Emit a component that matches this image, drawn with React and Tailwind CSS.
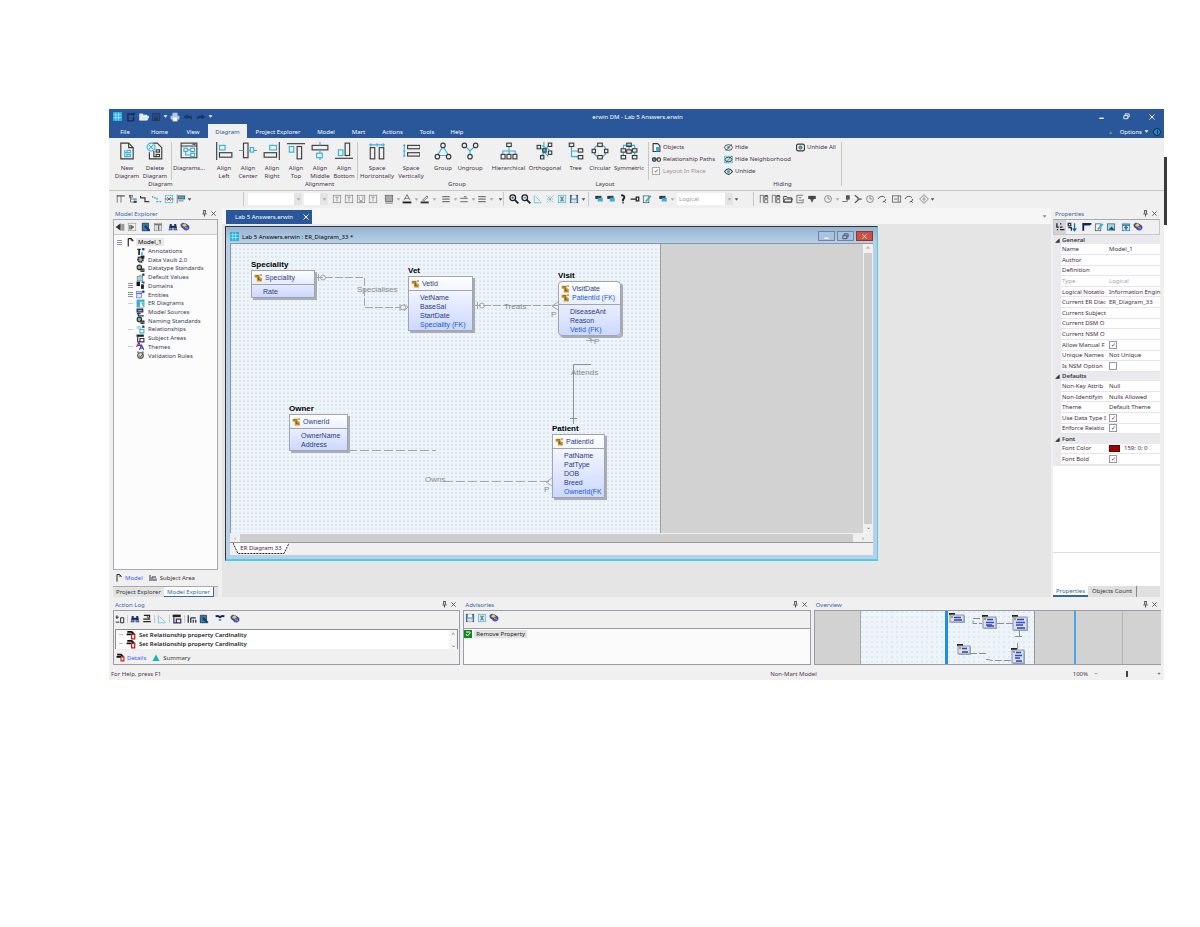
import React from "react";

const K = "#3a3a3a";
const C = "#35b0d8";

const box = (x, y, w, h, s = K, f = "none") => (
  <rect x={x} y={y} width={w} height={h} stroke={s} fill={f} />
);
const ln = (d, s = K) => <path d={d} stroke={s} fill="none" />;

const ICONS = {
  newDiagram: <>{ln("M2.5 1h7l4 4v10h-11z")}{ln("M9.500 1v4h4")}{ln("M6 7v6h2M6 9.500h2", C)}{box(8, 7.5, 3, 2, C)}{box(8, 11, 3, 2, C)}</>,
  deleteDiagram: <>{ln("M6 1h4l4 4v10H3V9")}{ln("M7 8v5h2")}{box(9, 7, 3, 2)}{box(9, 11, 3, 2)}<circle cx="4.500" cy="4.500" r="3.500" stroke={C} fill="#fff" />{ln("M2.500 2.500l4 4M6.500 2.500l-4 4", C)}</>,
  diagrams: <>{box(1, 1, 14, 13)}{ln("M1 3.500h14M11 2h3")}{box(3.5, 5.5, 3, 3, C)}{box(9.5, 5.5, 3.5, 3, C)}{box(9.5, 10, 3.5, 3, C)}{ln("M7 7h2M5 9v2.500h4", C)}</>,
  alignLeft: <>{ln("M1.500 0v16")}{box(4, 3, 5, 4, C)}{box(4, 9.5, 11, 4)}</>,
  alignCenter: <>{box(4, 1, 4, 13)}{box(10, 5, 3, 4, C)}{ln("M0 7.500h4M8 7.500h2M13 7.500h3", C)}</>,
  alignRight: <>{ln("M14.500 0v16")}{box(6, 3, 6, 4, C)}{box(1, 9.5, 11, 4)}</>,
  alignTop: <>{ln("M0 1.500h16")}{box(2, 4, 4, 5, C)}{box(9, 4, 4, 11)}</>,
  alignMiddle: <>{box(1, 3, 14, 4)}{box(5, 10, 5, 4, C)}{ln("M8 0v3M8 7v3M8 14v2", C)}</>,
  alignBottom: <>{ln("M0 14.500h16")}{box(3, 7, 4, 5, C)}{box(9, 1, 4, 11)}</>,
  spaceH: <>{box(2, 5, 4, 10)}{box(10, 5, 4, 10)}{ln("M1 2.500h14M2.500 1v3M8 1v3M13.500 1v3", C)}</>,
  spaceV: <>{box(5, 3, 11, 3)}{box(5, 9.5, 11, 3)}{ln("M2 2v11M1 3h2M1 8h2M1 12.500h2", C)}</>,
  group: <>{ln("M8 4L3 12h10z", C)}<circle cx="8" cy="3" r="2" stroke={K} fill="#f0f0f0" /><circle cx="3" cy="13" r="2" stroke={K} fill="#f0f0f0" /><circle cx="13" cy="13" r="2" stroke={K} fill="#f0f0f0" /></>,
  ungroup: <>{ln("M3 3l5 5 5-5M8 8v4", C)}<circle cx="3" cy="3" r="2" stroke={K} fill="#f0f0f0" /><circle cx="13" cy="3" r="2" stroke={K} fill="#f0f0f0" /><circle cx="8" cy="13" r="2" stroke={K} fill="#f0f0f0" /></>,
  hierarchical: <>{ln("M8 4v4M2.500 11V8h11v3M8 8v3", C)}{box(6, 1, 4, 3)}{box(1, 11, 3.5, 4)}{box(6.2, 11, 3.5, 4)}{box(11.5, 11, 3.5, 4)}</>,
  orthogonal: <>{ln("M4 5l7 8M11 3L5 13M5 3l7 4M7 0v10", C)}{box(1, 3, 3, 3)}{box(11, 1, 3, 3)}{box(6, 6, 3, 3)}{box(4, 12, 3, 3)}{box(11, 8, 3, 3)}</>,
  tree: <>{ln("M4 4v9h6M4 8h6", C)}{box(2, 1, 4, 3)}{box(10, 6, 4, 3)}{box(10, 12, 4, 3)}</>,
  circular: <><circle cx="8" cy="8" r="5.500" stroke={C} fill="none" />{box(6, 1, 4, 3, K, "#f0f0f0")}{box(6, 12, 4, 3, K, "#f0f0f0")}{box(1, 6.5, 3, 3, K, "#f0f0f0")}{box(12, 6.5, 3, 3, K, "#f0f0f0")}</>,
  symmetric: <>{ln("M8 3v4M3 6V3h10v3M3 9v3M13 9v3", C)}{box(6, 1, 4, 3)}{box(1, 6, 4, 3)}{box(6, 7, 4, 3)}{box(11, 6, 4, 3)}{box(1, 12, 4, 3)}{box(11, 12, 4, 3)}</>,
  objects: <><path d="M2 1h8l4 4v10H2z" fill="#fff" stroke={K} strokeWidth="2" /><path d="M7 7h6v8H7z" fill={C} /></>,
  relPaths: <><rect x="1" y="5" width="6" height="6" rx="2" stroke={K} fill={C} strokeWidth="2" /><rect x="9" y="5" width="6" height="6" rx="2" stroke={K} fill="none" strokeWidth="2" />{ln("M5 8h6")}</>,
  hide: <><ellipse cx="8" cy="8" rx="7" ry="5" stroke={K} fill="none" strokeWidth="1.500" /><circle cx="8" cy="8" r="2.500" fill={C} />{ln("M3 14L14 2")}</>,
  hideN: <><rect x="1" y="2" width="14" height="12" fill="#bfe4f2" stroke={C} /><ellipse cx="8" cy="8" rx="6" ry="4" stroke={K} fill="none" strokeWidth="1.500" />{ln("M3 14L14 2")}</>,
  unhide: <><path d="M1 8q7-10 14 0q-7 10-14 0z" stroke={K} fill="#fff" strokeWidth="2" /><circle cx="8" cy="8" r="3" fill={C} /></>,
  unhideAll: <><rect x="1" y="2" width="14" height="12" rx="3" stroke={K} fill="none" strokeWidth="2" /><circle cx="8" cy="8" r="3" fill={C} stroke={K} /></>,
  table: <>{ln("M2 2v12M1 3h13M8 3v11M2 3h12")}</>,
  nodes: <>{ln("M4 2v11h9M4 8h6")}{box(2, 2, 5, 3)}<rect x="9" y="7" width="5" height="3" fill={C} /><rect x="9" y="11" width="5" height="3" fill={K} /></>,
  rel: <path d="M1 3v3h7v6h7" stroke={K} fill="none" strokeWidth="2" />,
  relDash: <path d="M1 3v3h7v6h7" stroke={C} fill="none" strokeWidth="2" strokeDasharray="3 2" />,
  grid4: <>{box(2, 2, 12, 12, C)}{ln("M5 5l6 6M11 5l-6 6M1 8h14")}</>,
  alignS: <>{ln("M2 1v14")}<rect x="4" y="3" width="10" height="5" fill={C} stroke={K} />{ln("M4 11h8")}</>,
  cell: <>{box(2, 2, 12, 12, "#777")}{ln("M5 5h6M8 5v7", "#777")}</>,
  cellU: <>{box(2, 2, 12, 12, "#777")}{ln("M5 4v5q3 4 6 0V4M5 12h6", "#777")}</>,
  bucket: <>{box(2, 2, 12, 10, "#555", "#aaa")}{ln("M2 14.500h12")}</>,
  fontA: <>{ln("M3 10L8 1l5 9M5 7h6")}<rect x="1" y="12" width="14" height="3" fill="#222" /></>,
  pen: <>{ln("M4 10l7-7 2 2-7 6z")}<rect x="1" y="12" width="13" height="3" fill="#333" /></>,
  lines: <path d="M2 4h12M2 8h12M2 12h12" stroke="#777" strokeWidth="2" />,
  lines2: <path d="M2 7h12M2 12h12M8 4h4" stroke="#888" strokeWidth="2" />,
  zoomIn: <><circle cx="6" cy="6" r="4.500" stroke="#222" fill="#cfeaf5" strokeWidth="2" /><path d="M9 9l6 6" stroke="#222" strokeWidth="3" />{ln("M4 6h4M6 4v4")}</>,
  zoomOut: <><circle cx="6" cy="6" r="4.500" stroke="#222" fill="#cfeaf5" strokeWidth="2" /><path d="M9 9l6 6" stroke="#222" strokeWidth="3" />{ln("M4 6h4")}</>,
  corner: <path d="M2 2v12h12M4 4l8 8" stroke={C} fill="none" />,
  fit: <path d="M2 2l12 12M14 2L2 14M8 3v10M3 8h10" stroke="#6f9fb5" fill="none" strokeDasharray="3 1" />,
  fitBox: <>{box(2, 2, 12, 12, C, "#d6eef7")}{ln("M5 5h2v6H5M11 5H9v6h2")}</>,
  save: <>{box(2, 2, 12, 12, "#335", "#5aa8c8")}<rect x="5" y="2" width="6" height="5" fill="#fff" /><rect x="4" y="9" width="8" height="5" fill="#dde" /></>,
  flag: <><path d="M2 3h10v5H2z" fill={K} /><path d="M6 6h8v6H6z" fill={C} /></>,
  pin2: <><path d="M5 2q6 0 5 4l-2 3v2" stroke="#222" fill="none" strokeWidth="3" /><path d="M7 12h2v3H7z" fill="#222" /></>,
  plug: <path d="M1 8h9M10 5h4v6h-4z" stroke="#222" fill="none" strokeWidth="2" />,
  edit: <>{box(2, 3, 9, 11)}<path d="M6 12l8-9" stroke={C} strokeWidth="3" /></>,
  db: <>{ln("M2 2h5v12M2 2v12M9 3h5v4H9zM9 9h5v5H9z")}<path d="M9 2h5v2H9z" fill={K} /></>,
  folder: <path d="M1 4h5l1 2h7v7H1zM3 8h12l-2 5H1z" stroke="#444" fill="none" strokeWidth="1.500" />,
  doc: <>{ln("M3 2h10M3 2v12h10V8")}{ln("M6 6h4M6 10h6")}</>,
  download: <><path d="M2 3h12v5H2z" fill="#444" /><path d="M5 8h6l-3 6z" fill="#555" /></>,
  clock: <><circle cx="8" cy="8" r="5.500" stroke="#555" fill="none" />{ln("M8 4v4h3", "#555")}</>,
  branch: <path d="M3 2l5 4v4l-5 4M8 8h6" stroke="#555" fill="none" strokeWidth="2" />,
  fwd: <>{ln("M2 12h8V3")}<path d="M8 2h6v7H8z" fill="#555" /></>,
  sync: <path d="M2 8a6 5 0 0 1 11-2M14 8a6 5 0 0 1-5 5M11 11l3 3" stroke="#555" fill="none" strokeWidth="1.500" />,
  card: <>{box(1, 3, 13, 10, "#333")}{ln("M10 3v10M3 8h6")}</>,
  diamond: <><path d="M8 1l7 7-7 7-7-7z" stroke="#555" fill="none" />{ln("M8 4v8M5 8h6", "#777")}</>,
  app: <><rect x="0" y="0" width="16" height="16" fill="#22b0dc" /><path d="M1 5h14M1 10h14M5 1v14M10 1v14" stroke="#e6f8ff" /></>,
  newW: <path d="M10 3H3v11h9V8M9 5l5-4M12 1v5" stroke="#12284d" fill="none" strokeWidth="2" />,
  openW: <path d="M1 13V3h5l1 2h6v2M1 13l3-6h12l-3 6z" stroke="#fff" fill="#dde6f2" />,
  saveW: <>{box(2, 2, 12, 12, "#20365e", "#2c4878")}<rect x="5" y="9" width="6" height="5" fill="#20365e" /></>,
  printW: <><path d="M4 1h8v5h3v6h-3v3H4v-3H1V6h3z" fill="#b9c8df" /><rect x="5" y="9" width="6" height="5" fill="#fff" /></>,
  undo: <path d="M1 8l6-5v3h6q2 2 1 6-2-3-7-3v3z" fill="#1c3560" />,
  redo: <path d="M15 8L9 3v3H3Q1 8 2 12q2-3 7-3v3z" fill="#1c3560" />,
  key: <><path d="M1 3h9v4l4 2v6H5V9L1 8z" fill="#c79a2e" /><path d="M3 5h6M6 10l6 3M8 7v5" stroke="#5b4210" /><path d="M11 2h3v3h-3z" fill="#d96c3a" /></>,
  page: <><path d="M4 1h5l4 4M4 1v14" stroke="#222" fill="none" strokeWidth="2" /><path d="M9 1v4h4" stroke="#222" fill="none" /></>,
  note: <><path d="M2 3h7v2H7v9H4V5H2z" fill="#222" /><rect x="11" y="2" width="4" height="4" fill="#113a8c" /><rect x="9" y="9" width="3" height="5" fill={C} /></>,
  gearB: <><circle cx="8" cy="8" r="4.500" stroke="#222" fill="#aaa" strokeWidth="3" strokeDasharray="3 1" /><rect x="9" y="1" width="6" height="5" fill="#222" /></>,
  gearG: <><circle cx="6" cy="6" r="4" stroke="#333" fill="#7b8" strokeWidth="2" /><rect x="8" y="8" width="7" height="6" fill="#222" /><path d="M9 11h5" stroke="#fff" /></>,
  val: <><rect x="2" y="6" width="10" height="8" fill="#9ed3ec" stroke="#578" /><path d="M5 3h5v4H5z" fill="#d7ae5b" /><rect x="11" y="1" width="4" height="4" fill="#113a8c" /></>,
  domain: <><rect x="1" y="1" width="6" height="8" fill="#111" /><rect x="9" y="6" width="5" height="8" fill="#222" /><path d="M10 2h4v3" stroke="#113a8c" fill="none" strokeWidth="2" /></>,
  entity: <><rect x="1" y="3" width="9" height="11" fill="#dfe2fb" stroke="#5560bb" /><path d="M1 6h9" stroke="#5560bb" strokeWidth="2" /><rect x="11" y="1" width="4" height="4" fill="#113a8c" /></>,
  erd: <><rect x="1" y="1" width="14" height="14" fill={C} /><path d="M7 5h6v9H7z" fill="#fff" /><path d="M9 7h3v5" stroke="#15537a" fill="none" /></>,
  source: <><path d="M2 2h10v5H2zM2 10h6" stroke="#223" fill="#99a" strokeWidth="2" /><path d="M4 8v6h10" stroke="#113a8c" fill="none" strokeWidth="2" /></>,
  relT: <><path d="M1 2h8v5H1z" fill="#9fdcec" /><path d="M7 8h7v6H7z" stroke={C} fill="#fff" strokeWidth="2" /><rect x="11" y="1" width="4" height="4" fill="#113a8c" /></>,
  subject: <><rect x="1" y="1" width="13" height="4" fill="#222" /><path d="M3 5v9h11V8H7v6" stroke="#335" fill="none" strokeWidth="2" /></>,
  theme: <><path d="M1 9L5 1l4 8M3 6h4" stroke="#7a2b90" fill="none" strokeWidth="2" /><path d="M6 14l4-8 4 8M8 11h5" stroke="#3c4cc0" fill="none" strokeWidth="2" /></>,
  rule: <><circle cx="8" cy="8" r="5" stroke="#555" fill="#f3dfc5" strokeWidth="2" /><path d="M2 2h4M10 2h4M6 8l2 3 4-6" stroke="#333" fill="none" strokeWidth="1.500" /></>,
  back: <><path d="M9 2v12L1 8z" fill="#333" /><rect x="10" y="3" width="5" height="11" fill="#999" /></>,
  play: <>{box(2, 2, 12, 12, "#999")}<path d="M4 5v7M6 5l5 3-5 4z" stroke="#444" fill="#777" /></>,
  editB: <><path d="M2 2h10v12H2z" fill="#2e7bb5" stroke="#113" /><path d="M6 6l8 8" stroke="#143a66" strokeWidth="3" /></>,
  tableG: <>{box(2, 2, 12, 12, "#888", "#ddd")}<path d="M2 4h12M9 4v10" stroke="#777" strokeWidth="2" /></>,
  binoc: <><path d="M3 3h3v3h4V3h3l2 10H9V9H7v4H1z" fill="#1c2c66" /><path d="M2 11h4M10 11h4" stroke="#8fb0e0" strokeWidth="2" /></>,
  book: <><ellipse cx="8" cy="7" rx="7" ry="4" transform="rotate(25 8 7)" fill="#4b50b8" stroke="#222e66" /><path d="M3 5l4-3 4 3-4 3z" fill="#e6cf4e" /><path d="M6 11q5 4 8-1" stroke="#4b50b8" fill="none" strokeWidth="2" /><path d="M8 9l5 1" stroke="#dfe3ff" /></>,
  sort: <path d="M3 2v6h3M3 12h2M8 3h2M8 8h4M8 12h7" stroke="#222" fill="none" strokeWidth="2" />,
  sortAZ: <><path d="M2 2h4v4H2zM2 9h5v5" stroke="#234" fill="none" strokeWidth="2" /><path d="M12 2v11M9 10l3 4 3-4" stroke="#1769b5" fill="none" strokeWidth="2" /></>,
  tbl: <path d="M2 14V3h13M3 4h10" stroke="#16265a" fill="none" strokeWidth="3" />,
  photo: <><rect x="2" y="3" width="12" height="10" fill="#9dd" stroke="#245" /><path d="M4 12l5-5 5 6z" fill="#14508c" /></>,
  cal: <><rect x="2" y="3" width="12" height="11" fill="#cfe8f5" stroke="#1f6b8f" /><path d="M2 5h12M8 6v7M5 9h6" stroke="#1f6b8f" strokeWidth="2" /></>,
  plusD: <path d="M3 2v6M1 5h5M1 13h6M9 6h5v8H9z" stroke="#222" fill="none" strokeWidth="1.500" />,
  listEdit: <><path d="M3 2h9v4M2 8h11M2 12h12" stroke="#222" fill="none" strokeWidth="2" /><path d="M8 4l5 5" stroke="#555" strokeWidth="2" /></>,
  undoDoc: <><path d="M2 3h7l3 3v7M1 7h8" stroke="#111" fill="none" strokeWidth="3" /><path d="M9 7h5v7H9z" stroke="#c21c1c" fill="#fff" strokeWidth="2" /></>,
  tri: <path d="M8 1l7 13H1z" fill="#16b5b5" />,
  check: <><rect x="0" y="0" width="16" height="16" fill="#0e8a1c" /><path d="M4 4h8M4 8l3 4 6-7" stroke="#fff" fill="none" strokeWidth="2" /></>,
  pin: <path d="M5 1h6M6 1v7M10 1v7M3 9h10M8 9v6" stroke="#444" fill="none" strokeWidth="2" />,
  x: <path d="M3 3l10 10M13 3L3 13" stroke="currentColor" fill="none" strokeWidth="2" />,
  filter: <><path d="M1 4q3-2 7 1 4-3 7-1" stroke="#16265a" fill="none" strokeWidth="3" /><path d="M6 8h4v3H6z" fill="#5a8fd0" /></>,
  min: <path d="M3 12h10" stroke="currentColor" strokeWidth="3" />,
  restore: <path d="M5 5V2h9v7h-3M2 6h9v7H2z" stroke="currentColor" fill="none" strokeWidth="2" />,
  chart: <path d="M2 2v12M6 6h8M6 6v8M10 9v5M14 9v5" stroke="#234" fill="none" strokeWidth="2" />,
};

const SIZES = { 7: "size-[7px]", 8: "size-2", 9: "size-[9px]", 10: "size-[10px]", 18: "size-[18px]" };

function Icon({ n, s = 10 }) {
  return (
    <svg viewBox="0 0 16 16" className={`${SIZES[s]} shrink-0`} aria-hidden="true">
      {ICONS[n]}
    </svg>
  );
}

function IconButton({ n, label, s = 10, w = "w-3" }) {
  return (
    <button aria-label={label || n} className={`${w} flex shrink-0 items-center justify-center`}>
      <Icon n={n} s={s} />
    </button>
  );
}

function Arrow({ className = "text-[#888]" }) {
  return (
    <svg viewBox="0 0 8 8" className={`size-[5px] shrink-0 ${className}`} aria-hidden="true">
      <path d="M1 2h6L4 6z" fill="currentColor" />
    </svg>
  );
}

function TitleBar() {
  return (
    <header className="bg-[#2a579a] text-white">
      <div className="flex h-[15px] items-center">
        <div className="flex flex-1 items-center gap-[2px] pl-[2px]">
          <IconButton n="app" w="w-3" s={9} />
          <IconButton n="newW" />
          <IconButton n="openW" w="w-[10px]" />
          <IconButton n="saveW" w="w-[10px]" />
          <Arrow className="text-white" />
          <IconButton n="printW" w="w-[10px]" />
          <IconButton n="undo" />
          <IconButton n="redo" w="w-[10px]" />
          <Arrow className="text-white" />
        </div>
        <h1>erwin DM - Lab 5 Answers.erwin</h1>
        <div className="flex flex-1 justify-end">
          <IconButton n="min" s={7} w="w-[25px]" />
          <IconButton n="restore" s={7} w="w-[25px]" />
          <IconButton n="x" s={8} w="w-[25px]" />
        </div>
      </div>
      <nav className="flex h-[14px] items-stretch">
        {[
          ["File", "w-8"], ["Home", "w-[37px]"], ["View", "w-[30px]"], ["Diagram", "w-[39px] bg-[#f0f0f0] text-[#2a579a]"],
          ["Project Explorer", "w-[62px]"], ["Model", "w-[34px]"], ["Mart", "w-[31px]"], ["Actions", "w-[37px]"],
          ["Tools", "w-8"], ["Help", "w-7"],
        ].map(([t, c]) => (
          <button key={t} className={`${c} shrink-0 whitespace-nowrap pt-[2px]`}>{t}</button>
        ))}
        <div className="flex flex-1 items-center justify-end gap-1 pr-[3px] pt-px">
          <span className="text-[#8c8c8c]">▴</span>
          <button className="flex items-center gap-[2px] pl-1">Options<Arrow className="text-white" /></button>
          <button aria-label="About" className="flex size-2 items-center justify-center rounded-full border border-[#10233f] bg-[#1f8fd0]">
            <span className="h-1 w-px bg-[#10233f]" />
          </button>
        </div>
      </nav>
    </header>
  );
}

function BigButton({ n, label, w }) {
  return (
    <button className={`${w} flex shrink-0 flex-col items-center`}>
      <Icon n={n} s={18} />
      <span className="mt-1 whitespace-pre text-center leading-[8px]">{label}</span>
    </button>
  );
}

function RibbonGroup({ title, className, children }) {
  return (
    <section className={`flex shrink-0 flex-col ${className}`}>
      <div className="flex h-[38px]">{children}</div>
      <h2 className="text-center leading-[8px]">{title}</h2>
    </section>
  );
}

const Sep = ({ className = "" }) => <span className={`w-px shrink-0 bg-[#c8c8c8] ${className}`} />;

function SmallButton({ n, label }) {
  return (
    <button className="flex h-3 items-center gap-[2px] whitespace-nowrap text-left">
      <Icon n={n} s={9} />
      {label}
    </button>
  );
}

function Ribbon() {
  return (
    <div className="flex h-[53px] border-b border-[#c6c6c6] bg-[#f0f0f0] pl-1 pt-1 text-[#47304a]">
      <RibbonGroup title="Diagram" className="w-[95px]">
        <BigButton n="newDiagram" label={"New\nDiagram"} w="w-[28px]" />
        <BigButton n="deleteDiagram" label={"Delete\nDiagram"} w="w-[28px]" />
        <Sep className="ml-[2px]" />
        <BigButton n="diagrams" label="Diagrams..." w="w-[34px]" />
      </RibbonGroup>
      <RibbonGroup title="Alignment" className="ml-1 w-[215px]">
        <BigButton n="alignLeft" label={"Align\nLeft"} w="w-6" />
        <BigButton n="alignCenter" label={"Align\nCenter"} w="w-6" />
        <BigButton n="alignRight" label={"Align\nRight"} w="w-6" />
        <BigButton n="alignTop" label={"Align\nTop"} w="w-6" />
        <BigButton n="alignMiddle" label={"Align\nMiddle"} w="w-6" />
        <BigButton n="alignBottom" label={"Align\nBottom"} w="w-6" />
        <Sep className="mx-px" />
        <BigButton n="spaceH" label={"Space\nHorizontally"} w="w-[36px]" />
        <BigButton n="spaceV" label={"Space\nVertically"} w="w-8" />
      </RibbonGroup>
      <RibbonGroup title="Group" className="ml-[3px] w-[54px]">
        <BigButton n="group" label="Group" w="w-[26px]" />
        <BigButton n="ungroup" label="Ungroup" w="w-[28px]" />
      </RibbonGroup>
      <RibbonGroup title="Layout" className="ml-[6px] w-[230px]">
        <BigButton n="hierarchical" label="Hierarchical" w="w-[37px]" />
        <BigButton n="orthogonal" label="Orthogonal" w="w-[36px]" />
        <BigButton n="tree" label="Tree" w="w-[25px]" />
        <BigButton n="circular" label="Circular" w="w-6" />
        <BigButton n="symmetric" label="Symmetric" w="w-[34px]" />
        <Sep className="ml-[2px]" />
        <div className="-mt-px ml-[3px] flex flex-col">
          <SmallButton n="objects" label="Objects" />
          <SmallButton n="relPaths" label="Relationship Paths" />
          <label className="flex h-3 items-center gap-[3px] whitespace-nowrap text-[#a08f98]">
            <input type="checkbox" defaultChecked className="size-2 appearance-none border border-[#aaa] bg-white text-center leading-[6px] text-[#333] checked:before:block checked:before:content-['✓']" />
            Layout In Place
          </label>
        </div>
      </RibbonGroup>
      <RibbonGroup title="Hiding" className="ml-[4px] w-[117px]">
        <div className="-mt-px flex w-[72px] flex-col">
          <SmallButton n="hide" label="Hide" />
          <SmallButton n="hideN" label="Hide Neighborhood" />
          <SmallButton n="unhide" label="Unhide" />
        </div>
        <div className="-mt-px">
          <SmallButton n="unhideAll" label="Unhide All" />
        </div>
      </RibbonGroup>
      <Sep className="mb-1" />
    </div>
  );
}

function Combo({ label, value, w }) {
  return (
    <span className={`relative flex h-3 shrink-0 ${w}`}>
      <select aria-label={label} className="w-full appearance-none rounded-none bg-white pl-[2px] text-[#999]" defaultValue={value}>
        <option>{value}</option>
      </select>
      <span className="pointer-events-none absolute inset-y-0 right-0 flex w-2 items-center justify-center bg-[#e4e4e4]">
        <Arrow className="text-[#aaa]" />
      </span>
    </span>
  );
}

function Icons({ names }) {
  return names.map((n, i) => <IconButton key={i} n={n} />);
}

function WithArrow({ n, w = "w-[18px]" }) {
  return (
    <button aria-label={n} className={`flex ${w} shrink-0 items-center justify-between pl-px`}>
      <Icon n={n} />
      <Arrow className="text-[#aaa]" />
    </button>
  );
}

function ToolStrip() {
  return (
    <div className="flex h-4 items-center bg-[#f0f0f0] pl-[6px] text-[#555]">
      <div className="flex w-32 items-center">
        <Icons names={["table", "nodes", "rel", "relDash", "grid4", "alignS"]} />
        <Arrow className="text-[#555]" />
      </div>
      <Sep className="h-[14px]" />
      <div className="ml-1 flex w-[255px] items-center">
        <Combo label="Font" value="" w="w-[54px]" />
        <span className="w-[2px]" />
        <Combo label="Font size" value="" w="w-6" />
        <span className="w-[3px]" />
        <Icons names={["cell", "cell", "cellU", "cell"]} />
        <span className="w-1" />
        <WithArrow n="bucket" />
        <WithArrow n="fontA" />
        <WithArrow n="pen" />
        <span className="w-[3px]" />
        <WithArrow n="lines" />
        <WithArrow n="lines2" />
        <WithArrow n="lines" />
        <Arrow className="ml-1 text-[#555]" />
      </div>
      <Sep className="h-[14px]" />
      <div className="ml-1 flex w-[80px] items-center">
        <Icons names={["zoomIn", "zoomOut", "corner", "fit", "fitBox", "save"]} />
        <Arrow className="ml-px text-[#555]" />
      </div>
      <Sep className="h-[14px]" />
      <div className="ml-1 flex w-40 items-center">
        <Icons names={["flag", "flag", "pin2", "plug", "edit"]} />
        <span className="w-1" />
        <WithArrow n="flag" />
        <span className="w-[2px]" />
        <Combo label="Model view" value="Logical" w="w-[56px]" />
        <Arrow className="ml-px text-[#555]" />
      </div>
      <Sep className="h-[14px]" />
      <div className="ml-1 flex items-center">
        <Icons names={["db", "db", "folder", "doc", "download"]} />
        <span className="w-1" />
        <WithArrow n="clock" />
        <Icons names={["fwd", "branch", "clock", "sync"]} />
        <span className="w-[3px]" />
        <Icons names={["card", "sync"]} />
        <span className="w-[3px]" />
        <IconButton n="diamond" />
        <Arrow className="text-[#555]" />
      </div>
    </div>
  );
}

function PaneHeader({ title, className = "" }) {
  return (
    <div className={`flex h-[11px] shrink-0 items-center pl-[2px] text-[#3465a4] ${className}`}>
      <h2 className="flex-1">{title}</h2>
      <button aria-label="Pin" className="px-px"><Icon n="pin" s={7} /></button>
      <button aria-label="Close" className="px-px text-[#555]"><Icon n="x" s={7} /></button>
    </div>
  );
}

const TREE = [
  ["note", "Annotations", ""], ["gearB", "Data Vault 2.0", ""], ["gearG", "Datatype Standards", ""], ["val", "Default Values", ""],
  ["domain", "Domains", "+"], ["entity", "Entities", "+"], ["erd", "ER Diagrams", "-"], ["source", "Model Sources", ""],
  ["gearG", "Naming Standards", ""], ["relT", "Relationships", "-"], ["subject", "Subject Areas", ""], ["theme", "Themes", "-"],
  ["rule", "Validation Rules", ""],
];

function Expander({ kind }) {
  if (kind === "+") return <span className="flex size-[5px] items-center border-y border-[#8a8f9c] bg-white"><i className="h-px w-full bg-[#8a8f9c]" /></span>;
  if (kind === "-") return <span className="h-px w-[5px] bg-[#ccc]" />;
  return <span className="w-[5px]" />;
}

function ModelExplorer() {
  return (
    <aside className="flex w-[113px] shrink-0 flex-col pl-1">
      <PaneHeader title="Model Explorer" className="pr-1" />
      <div className="mr-1 flex h-4 items-center border border-[#a9a9b2] border-b-[#c8c8c8]">
        <Icons names={["back", "play"]} />
        <span className="w-[2px]" />
        <Icons names={["editB", "tableG"]} />
        <span className="w-[3px]" />
        <Icons names={["binoc", "book"]} />
      </div>
      <div className="mr-1 flex-1 border border-t-0 border-[#a9a9b2] bg-[#fcfcfc] pt-[3px] text-[#3a3a5c]">
        <ul className="grid h-[122px] auto-rows-fr">
          <li className="flex items-center pl-[3px]">
            <Expander kind="+" />
            <span className="ml-[4px]"><Icon n="page" s={9} /></span>
            <span className="ml-px bg-[#e8e8e8] px-[2px] leading-[8px] text-black">Model_1</span>
          </li>
          {TREE.map(([n, t, k]) => (
            <li key={t} className="flex items-center gap-[3px] whitespace-nowrap pl-[14px]">
              <Expander kind={k} />
              <Icon n={n} s={9} />
              {t}
            </li>
          ))}
        </ul>
      </div>
      <div className="flex h-4 items-center gap-[2px] pl-[2px]">
        <Icon n="page" s={8} /><a href="#model" className="text-[#3a5cff]">Model</a>
        <span className="w-[2px]" />
        <Icon n="chart" s={8} /><a href="#subject" className="pl-px">Subject Area</a>
      </div>
      <div className="mr-1 flex h-[11px] border-t border-[#aaa] bg-[#e3e3e3]">
        <button className="w-[51px] whitespace-nowrap">Project Explorer</button>
        <button className="w-[50px] whitespace-nowrap border-b border-r border-[#3465a4] bg-white text-[#3465a4]">Model Explorer</button>
      </div>
    </aside>
  );
}

function Entity({ title, pos, keys, attrs, rounded = "" }) {
  return (
    <div className={`absolute font-['Liberation_Sans',Arial,sans-serif] text-[7px] leading-[9px] ${pos}`}>
      <h3 className="h-[10px] text-[8px] font-bold leading-[10px] text-black">{title}</h3>
      <div className={`overflow-hidden border border-[#a4a4ac] bg-linear-to-b from-white to-[#ccd8ff] text-[#2b3a86] shadow-[2px_2px_0_#a9adb5] ${rounded}`}>
        <div className="border-b border-[#a4a4ac] py-[2px]">
          {keys.map(([t, fk]) => (
            <p key={t} className={`flex h-[9px] items-center gap-[2px] whitespace-nowrap pl-[2px] ${fk ? "text-[#1458d8]" : ""}`}>
              <Icon n="key" s={9} />{t}
            </p>
          ))}
        </div>
        <div className="pb-px pl-[11px] pt-[2px]">
          {attrs.map(([t, fk]) => (
            <p key={t} className={`whitespace-nowrap ${fk ? "text-[#1458d8]" : ""}`}>{t}</p>
          ))}
        </div>
      </div>
    </div>
  );
}

function Diagram() {
  return (
    <div className="relative h-full w-[430px] shrink-0 overflow-hidden border-r border-[#a0a0a0] bg-[#edf5fb] bg-[radial-gradient(circle_at_1px_1px,#dde7ef_1px,transparent_1px)] bg-size-[4px_4px]">
      <svg className="absolute inset-0 size-full" aria-hidden="true">
        <g fill="none" stroke="#a3a7ab" strokeWidth="1">
          <path strokeDasharray="8 2" d="M84 33.500H133.500V63.500H170" />
          <path d="M87.500 30v7M169 60v7M173 60l4 3-4 4" />
          <circle cx="92" cy="33.500" r="2.500" />
          <circle cx="172" cy="63.500" r="2.500" />
          <path strokeDasharray="8 2" d="M242 61.500H328" />
          <path d="M246.500 58v7" /><circle cx="251" cy="61.500" r="2.500" />
          <path d="M321 62l6-4M321 62l6 4" />
          <path d="M360 92v7M355 96.500h9M356 93l7 4" />
          <path d="M360 120.500H342.500V180M339 174.500h7" stroke="#8e9296" />
          <path strokeDasharray="9 3" d="M117 206.500H205M213 237.500H321" />
          <path d="M315 238l6-4M315 238l6 4" />
        </g>
      </svg>
      <div className="font-['Liberation_Sans',Arial,sans-serif] text-[8px] leading-[9px] text-[#85888c]">
        <span className="absolute left-[126px] top-[41px]">Specialises</span>
        <span className="absolute left-[273px] top-[58px]">Treats</span>
        <span className="absolute left-[320px] top-[66px]">P</span>
        <span className="absolute left-[363px] top-[93px]">P</span>
        <span className="absolute left-[340px] top-[124px]">Attends</span>
        <span className="absolute left-[194px] top-[231px]">Owns</span>
        <span className="absolute left-[313px] top-[241px]">P</span>
      </div>
      <Entity title="Speciality" pos="left-5 top-4 w-[64px]" keys={[["Speciality"]]} attrs={[["Rate"]]} />
      <Entity title="Vet" pos="left-[177px] top-[22px] w-[65px]" keys={[["VetId"]]} attrs={[["VetName"], ["BaseSal"], ["StartDate"], ["Speciality (FK)", 1]]} />
      <Entity title="Visit" pos="left-[327px] top-[27px] w-[63px]" rounded="rounded-[4px]" keys={[["VisitDate"], ["PatientId (FK)", 1]]} attrs={[["DiseaseAnt"], ["Reason"], ["VetId (FK)", 1]]} />
      <Entity title="Owner" pos="left-[58px] top-40 w-[59px]" keys={[["OwnerId"]]} attrs={[["OwnerName"], ["Address"]]} />
      <Entity title="Patient" pos="left-[321px] top-[180px] w-[53px]" keys={[["PatientId"]]} attrs={[["PatName"], ["PatType"], ["DOB"], ["Breed"], ["OwnerId(FK", 1]]} />
    </div>
  );
}

function Workspace() {
  return (
    <main className="flex min-w-0 flex-1 flex-col bg-[#e5e5e5]">
      <div className="flex h-4 items-end bg-[#f6f6f6] pl-1">
        <button className="flex h-[14px] items-center gap-[9px] bg-[#2a579a] pl-[9px] pr-[2px] text-white">
          Lab 5 Answers.erwin
          <Icon n="x" s={8} />
        </button>
        <span className="flex h-full flex-1 items-center justify-end pr-1"><Arrow /></span>
      </div>
      <section className="ml-[3px] mr-[173px] mt-[2px] border border-b-2 border-[#45d0e8] border-l-[#333] border-t-[#333] bg-[#b9cfe8] px-[4px] pb-1">
        <div className="-mx-1 flex h-4 items-end bg-linear-to-b from-[#98b4d0] to-[#b8d0ea] pb-[2px] pl-1 pr-[4px]">
          <Icon n="app" s={9} />
          <h2 className="flex-1 pl-[3px] text-black">Lab 5 Answers.erwin : ER_Diagram_33 *</h2>
          <div className="flex gap-[2px] text-white">
            <button aria-label="Minimise" className="flex h-[10px] w-[17px] items-center justify-center border border-[#6a87a8] bg-[#a9c3de]"><Icon n="min" s={7} /></button>
            <button aria-label="Restore" className="flex h-[10px] w-[17px] items-center justify-center border border-[#6a87a8] bg-[#a9c3de] text-[#445]"><Icon n="restore" s={7} /></button>
            <button aria-label="Close" className="flex h-[10px] w-[17px] items-center justify-center border border-[#8a3a30] bg-[#cc5140]"><Icon n="x" s={7} /></button>
          </div>
        </div>
        <div className="flex h-[290px] border-l border-t border-[#8f959c] bg-[#d2d2d2]">
          <Diagram />
          <div className="flex-1" />
          <div className="flex w-[10px] flex-col items-center bg-[#f0f0f0] text-[#555]">
            <span className="h-[9px] leading-[9px]">^</span>
            <span className="w-2 flex-1 bg-[#cdcdcd]" />
            <span className="h-[9px] leading-[7px]">⌄</span>
          </div>
        </div>
        <div className="flex h-[10px] items-center border-b border-[#999] bg-[#f0f0f0] text-[#555]">
          <span className="w-[10px] text-center leading-[8px]">‹</span>
          <span className="h-2 flex-1 bg-[#cdcdcd]" />
          <span className="w-5 text-center leading-[8px]">›</span>
        </div>
        <div className="relative h-3 bg-[#f0f0f0] pl-[3px]">
          <svg viewBox="0 0 56 11" className="absolute left-[3px] top-0 h-[11px] w-14" aria-hidden="true">
            <path d="M0 0l5 10.500h46L56 0" fill="#fff" stroke="#222" strokeDasharray="2 1" />
          </svg>
          <button className="relative w-14 whitespace-nowrap leading-[10px] text-[#501040]">ER Diagram 33</button>
        </div>
      </section>
    </main>
  );
}

const PROPS = [
  { g: "General" },
  { k: "Name", v: "Model_1" }, { k: "Author" }, { k: "Definition" }, { k: "Type", v: "Logical", off: true },
  { k: "Logical Notatio", v: "Information Engin" }, { k: "Current ER Diac", v: "ER_Diagram_33" },
  { k: "Current Subject" }, { k: "Current DSM O" }, { k: "Current NSM O" },
  { k: "Allow Manual F", c: true }, { k: "Unique Names", v: "Not Unique" }, { k: "Is NSM Option", c: false },
  { g: "Defaults" },
  { k: "Non-Key Attrib", v: "Null" }, { k: "Non-Identifyin", v: "Nulls Allowed" }, { k: "Theme", v: "Default Theme" },
  { k: "Use Data Type I", c: true }, { k: "Enforce Relatio", c: true },
  { g: "Font" },
  { k: "Font Color", v: "159; 0; 0", sw: true }, { k: "Font Bold", c: true },
];

function PropertyRow({ p }) {
  if (p.g) {
    return (
      <tr className="bg-[#eaeaee] text-[#333]">
        <td className="p-0 text-center leading-[8px]">◢</td>
        <th colSpan={2} className="p-0 pl-px text-left font-semibold leading-[8px]">{p.g}</th>
      </tr>
    );
  }
  return (
    <tr className={p.off ? "text-[#a9a0a8]" : "text-[#4a2a4a]"}>
      <td className="bg-[#eaeaee] p-0" />
      <th className="whitespace-nowrap border-b border-[#e6e6ea] p-0 pl-px text-left font-normal leading-[8px]">{p.k}</th>
      <td className="whitespace-nowrap border-b border-[#e6e6ea] p-0 pl-px leading-[8px]">
        {p.c !== undefined && (
          <input type="checkbox" aria-label={p.k} defaultChecked={p.c} className="block size-2 appearance-none border border-[#999] bg-white text-center leading-[6px] checked:before:block checked:before:content-['✓']" />
        )}
        {p.sw && <span className="mr-1 inline-block h-[7px] w-[11px] border border-[#600] bg-[#9f0000] align-middle" />}
        {p.v}
      </td>
    </tr>
  );
}

function Properties() {
  return (
    <aside className="flex w-[113px] shrink-0 flex-col pl-[2px] pr-1">
      <PaneHeader title="Properties" className="pr-px" />
      <div className="flex h-4 items-center border border-[#c6c6cc] border-t-[#a9a9b2]">
        <span className="flex h-full items-center bg-[#d4d4d8]"><IconButton n="sort" /></span>
        <IconButton n="sortAZ" />
        <span className="w-[3px]" />
        <Icons names={["tbl", "edit", "photo"]} />
        <span className="w-[3px]" />
        <Icons names={["cal", "book"]} />
      </div>
      <div className="flex flex-1 flex-col bg-white">
        <table className="h-[230px] w-full table-fixed border-separate border-spacing-0">
          <colgroup>
            <col className="w-2" />
            <col className="w-[47px]" />
            <col />
          </colgroup>
          <tbody>{PROPS.map((p) => <PropertyRow key={p.g || p.k} p={p} />)}</tbody>
        </table>
        <div className="flex-1 border-t border-[#e6e6ea]" />
        <div className="h-[34px] border-t border-[#dcdce0]" />
      </div>
      <div className="flex h-[11px] bg-[#e0e0e0]">
        <button className="w-[35px] border-b-2 border-[#3465a4] bg-white leading-[8px] text-[#3465a4]">Properties</button>
        <button className="border-r border-[#888] px-1 leading-[9px]">Objects Count</button>
      </div>
    </aside>
  );
}

function ActionLog() {
  return (
    <section className="flex min-w-0 flex-1 flex-col">
      <PaneHeader title="Action Log" className="pr-[2px]" />
      <div className="flex flex-1 flex-col border border-[#9c9ca6]">
        <div className="flex h-4 items-center">
          <IconButton n="plusD" label="Expand" /><Sep className="mx-px h-2" />
          <Icons names={["binoc", "listEdit"]} /><Sep className="mx-px h-2" />
          <IconButton n="corner" label="Columns" /><Sep className="mx-px h-2" />
          <IconButton n="subject" label="Filter" /><Sep className="mx-px h-2" />
          <Icons names={["chart", "editB"]} />
          <span className="w-1" />
          <IconButton n="filter" label="Match" />
          <span className="w-[3px]" />
          <IconButton n="book" label="Help" />
        </div>
        <div className="mx-px mt-[2px] flex h-5 border border-b-0 border-[#8c8c98] bg-white text-[#222]">
          <ul className="flex-1 font-semibold">
            {[0, 1].map((i) => (
              <li key={i} className="flex h-[9px] items-center gap-[3px] pl-[3px]">
                <span className="h-px w-1 bg-[#bbb]" />
                <Icon n="undoDoc" s={10} />
                Set Relationship property Cardinality
              </li>
            ))}
          </ul>
          <div className="flex w-2 flex-col items-center justify-between bg-[#f4f4f4] text-[#555]">
            <span className="leading-[9px]">^</span>
            <span className="leading-[8px]">⌄</span>
          </div>
        </div>
        <div className="flex flex-1 items-center gap-[2px] pl-[2px] pt-[2px]">
          <Icon n="undoDoc" s={9} /><a href="#details" className="text-[#3a5cff]">Details</a>
          <span className="w-[2px]" />
          <Icon n="tri" s={8} /><a href="#summary" className="pl-px">Summary</a>
        </div>
      </div>
    </section>
  );
}

function Advisories() {
  return (
    <section className="flex min-w-0 flex-1 flex-col">
      <PaneHeader title="Advisories" className="pr-[2px]" />
      <div className="flex flex-1 flex-col border border-[#9c9ca6]">
        <div className="flex h-[18px] items-start border-b border-[#9c9ca6] pt-[2px]">
          <Icons names={["save", "fitBox", "book"]} />
        </div>
        <div className="flex-1 bg-[#fbfbfb]">
          <p className="flex h-[9px] items-center gap-[2px]">
            <Icon n="check" s={8} />
            <span className="bg-[#e4e4e4] px-[2px] text-[#222]">Remove Property</span>
          </p>
        </div>
      </div>
    </section>
  );
}

const MINI = [
  [2, 4, 14, 7], [35, 6, 13, 11], [65, 6, 14, 13], [10, 35, 12, 8], [64, 39, 12, 13],
];

function Overview() {
  return (
    <section className="flex min-w-0 flex-1 flex-col">
      <PaneHeader title="Overview" className="pr-[2px]" />
      <div className="flex flex-1 overflow-hidden border border-r-0 border-[#9c9ca6] bg-[#d2d2d2]">
        <div className="w-[46px] border-r border-[#a9a9a9]" />
        <div className="w-[84px] bg-[#edf5fb] bg-[radial-gradient(circle_at_1px_1px,#dfe8ef_1px,transparent_1px)] bg-size-[5px_5px]" />
        <div className="w-[3px] bg-[#1d8fe8]" />
        <svg viewBox="0 0 86 53" className="h-[53px] w-[86px] shrink-0 bg-[#edf5fb] bg-[radial-gradient(circle_at_1px_1px,#dfe8ef_1px,transparent_1px)] bg-size-[5px_5px]" aria-hidden="true">
          <path d="M32 7.500h-7v5h9M49 12.500h16M71.500 19v6M67 25.500h7M69.500 32v6M22 42.500h18M38 48.500h3l2 1h20" stroke="#8a8f94" fill="none" strokeDasharray="7 2" />
          {MINI.map(([x, y, w, h]) => (
            <g key={x}>
              <rect x={x - 1} y={y - 2} width="6" height="2" fill="#222" />
              <rect x={x + 1} y={y + 1} width={w} height={h} fill="#a9adb5" />
              <rect x={x} y={y} width={w} height={h} fill="#d5dffb" stroke="#8e93a0" />
              <rect x={x + 1} y={y + 1} width="2" height="2" fill="#c79a2e" />
              <path d={`M${x + 4} ${y + 2.5}h${w - 7}M${x + 4} ${y + h - 2}h${w - 6}`} stroke="#33469c" strokeWidth="1.500" />
              {h > 10 && <path d={`M${x + 3} ${y + 5.5}h${w - 5}M${x + 3} ${y + 8}h${w - 7}`} stroke="#2d4fb8" strokeWidth="1.500" />}
            </g>
          ))}
        </svg>
        <div className="w-[42px] border-l border-r-2 border-l-[#999] border-r-[#46a6e8]" />
        <div className="w-[47px] border-r border-[#b4b4b4]" />
      </div>
    </section>
  );
}

export default function App() {
  return (
    <div className="flex min-h-screen items-start bg-white pb-60 pl-[109px] pr-[33px] pt-[109px] font-['Noto_Sans','Open_Sans',sans-serif] text-[6px] leading-[8px] text-[#333]">
      <div className="flex min-w-0 flex-1 flex-col bg-[#f0f0f0]">
        <TitleBar />
        <Ribbon />
        <ToolStrip />
        <div className="mt-px flex min-h-[389px] items-stretch">
          <ModelExplorer />
          <Workspace />
          <Properties />
        </div>
        <div className="mt-[2px] flex h-[66px] gap-[3px] pl-1 pr-[3px]">
          <ActionLog />
          <Advisories />
          <Overview />
        </div>
        <footer className="mt-[2px] flex h-[13px] items-center pl-[2px] text-[#53344f]">
          <span className="flex-1">For Help, press F1</span>
          <span className="mr-[256px]">Non-Mart Model</span>
          <span>100%</span>
          <button aria-label="Zoom out" className="ml-1 w-2">−</button>
          <span className="ml-[26px] h-[6px] w-[2px] bg-[#444]" />
          <button aria-label="Zoom in" className="ml-[26px] w-[10px]">+</button>
        </footer>
      </div>
      <div className="mt-12 h-[68px] w-[3px] shrink-0 bg-[#3a3a3a]" />
    </div>
  );
}
